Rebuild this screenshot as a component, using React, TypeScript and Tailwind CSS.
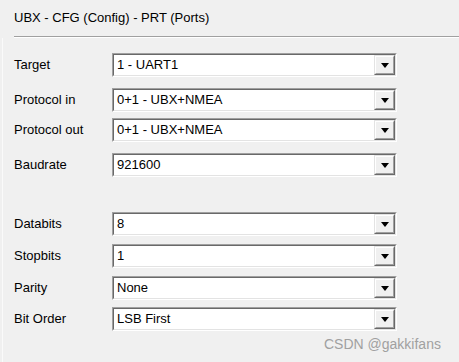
const rows = [
  { label: 'Target', value: '1 - UART1', mt: 'mt-[15px]' },
  { label: 'Protocol in', value: '0+1 - UBX+NMEA', mt: 'mt-[11px]' },
  { label: 'Protocol out', value: '0+1 - UBX+NMEA', mt: 'mt-[6px]' },
  { label: 'Baudrate', value: '921600', mt: 'mt-[11px]' },
  { label: 'Databits', value: '8', mt: 'mt-[35px]' },
  { label: 'Stopbits', value: '1', mt: 'mt-[8px]' },
  { label: 'Parity', value: 'None', mt: 'mt-[8px]' },
  { label: 'Bit Order', value: 'LSB First', mt: 'mt-[7px]' },
];

function ComboBox({ value }: { value: string }) {
  return (
    <div className="flex h-[24px] w-[285px] border border-t-[#a0a0a0] border-l-[#a0a0a0] border-b-white border-r-white">
      <div className="flex flex-1 border border-t-[#696969] border-l-[#696969] border-b-[#e3e3e3] border-r-[#e3e3e3] bg-white">
        <span className="flex-1 pl-[3px] leading-[20px] text-black">{value}</span>
        <div className="flex h-full w-[21px] border border-t-[#e3e3e3] border-l-[#e3e3e3] border-b-[#696969] border-r-[#696969]">
          <div className="flex flex-1 items-center justify-center border border-t-white border-l-white border-b-[#a0a0a0] border-r-[#a0a0a0] bg-[#f0f0f0]">
            <svg width="8" height="5" viewBox="0 0 8 5">
              <path d="M0 0H8L4 5Z" fill="#000" />
            </svg>
          </div>
        </div>
      </div>
    </div>
  );
}

export default function App() {
  return (
    <div
      className="relative h-[362px] w-[459px] overflow-hidden bg-[#f0f0f0] text-[13px] text-black"
      style={{ fontFamily: '"Liberation Sans", Arial, sans-serif' }}
    >
      {/* faint panel edge */}
      <div className="absolute left-[2px] top-[38px] bottom-0 w-px bg-[#fafafa]" />

      <div className="pl-[14px] pt-[10px]">
        <div className="h-[26px] leading-[16px]">UBX - CFG (Config) - PRT (Ports)</div>
        <div className="border-t border-t-[#a0a0a0] border-b border-b-white" />

        {rows.map((r) => (
          <div key={r.label} className={`flex items-center ${r.mt}`}>
            <span className="w-[98px]">{r.label}</span>
            <ComboBox value={r.value} />
          </div>
        ))}
      </div>

      <div className="absolute left-[324px] top-[336px] text-[14px] leading-[17px] text-[#a0a0a0]">
        CSDN @gakkifans
      </div>
    </div>
  );
}
